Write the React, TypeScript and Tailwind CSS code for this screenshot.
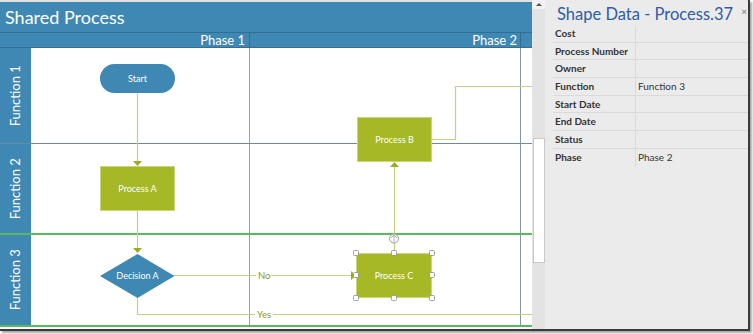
import React from 'react';

const font = { fontFamily: 'Lato, "Open Sans", Arial, sans-serif' };

const rows: [string, string][] = [
  ['Cost', ''],
  ['Process Number', ''],
  ['Owner', ''],
  ['Function', 'Function 3'],
  ['Start Date', ''],
  ['End Date', ''],
  ['Status', ''],
  ['Phase', 'Phase 2'],
];

function Lane({ label, h, top }: { label: string; h: string; top?: string }) {
  return (
    <div className={`flex shrink-0 ${h} ${top ?? ''}`}>
      <div className="w-[31px] bg-[#3f88b4] flex items-center justify-center overflow-hidden">
        <span className="-rotate-90 whitespace-nowrap text-white text-[13px]">{label}</span>
      </div>
      <div className="flex-1 flex">
        <div className="w-[219px] border-r border-[#8ea3b5]" />
        <div className="w-[271px] border-r border-[#7f96a8]" />
        <div className="flex-1" />
      </div>
    </div>
  );
}

function Box({ x, y, w, h, text, round }: { x: number; y: number; w: number; h: number; text: string; round?: boolean }) {
  return (
    <div
      className={`absolute flex items-center justify-center text-[9px] text-white ${round ? 'rounded-full bg-[#3f88b4]' : 'bg-[#a6b826] border border-[#c9d67a]'}`}
      style={{ left: x, top: y, width: w, height: h }}
    >
      {text}
    </div>
  );
}

function Diagram() {
  const line = '#c3d37d';
  const arrow = '#98ad1f';
  const handles = [
    [356, 253], [394, 253], [432, 253],
    [356, 275], [432, 275],
    [356, 298], [394, 298], [432, 298],
  ];
  return (
    <div className="relative w-[532px] h-full flex flex-col pt-[2px] bg-[#e0e0e0]" style={font}>
      <div className="shrink-0 h-[30px] bg-[#3f88b4] text-white text-[18px] pl-[5px] flex items-center">Shared Process</div>
      <div className="shrink-0 h-[16px] bg-[#3f88b4] border-y border-[#2f6f94] flex text-white text-[13px]">
        <div className="w-[31px]" />
        <div className="w-[219px] border-r border-[#2f6f94] text-right pr-[4px] leading-[14px]">Phase 1</div>
        <div className="w-[271px] border-r border-[#2f6f94] text-right pr-[3px] leading-[14px]">Phase 2</div>
      </div>
      <div className="bg-white flex flex-col shrink-0">
        <Lane label="Function 1" h="h-[95px]" />
        <Lane label="Function 2" h="h-[90px]" top="border-t border-[#6d8aa0]" />
        <Lane label="Function 3" h="h-[92px]" top="border-t-2 border-[#5cb85c]" />
        <div className="h-[2px] bg-[#5cb85c]" />
      </div>
      <div className="flex-1 bg-white" />

      <svg className="absolute left-0 top-0" width="532" height="334">
        <g fill="none" stroke={line} strokeWidth="1.2">
          <path d="M137.5 92 V161" />
          <path d="M137.5 211 V248" />
          <path d="M174 275.5 H351" />
          <path d="M137.5 298 V314.5 H532" />
          <path d="M394.5 253 V167" />
          <path d="M431 139.5 H455.5 V86.5 H532" />
        </g>
        <path d="M133 161 L142 161 L137.5 166 Z" fill={arrow} />
        <path d="M133 248 L142 248 L137.5 253 Z" fill={arrow} />
        <path d="M390 167 L399 167 L394.5 162 Z" fill={arrow} />
        <path d="M351 271 L351 280 L356 275.5 Z" fill={arrow} />
        <path d="M137.5 254 L174.5 276 L137.5 298 L100 276 Z" fill="#3f88b4" />
        <rect x="256" y="269" width="15" height="12" fill="white" />
        <rect x="255" y="308" width="18" height="12" fill="white" />
        <text x="258" y="278.5" fontSize="9.5" fill="#8a9b22" style={font}>No</text>
        <text x="257" y="317.5" fontSize="9.5" fill="#8a9b22" style={font}>Yes</text>
        <text x="137.5" y="279" fontSize="9" fill="white" textAnchor="middle" style={font}>Decision A</text>
        <circle cx="394" cy="238.5" r="4.5" fill="white" stroke="#9a9a9a" strokeWidth="1" />
        <path d="M394 235 V242 M391 238 L394 235 L397 238" fill="none" stroke="#9a9a9a" strokeWidth="0.8" />
      </svg>

      <Box x={100} y={64} w={75} h={29} text="Start" round />
      <Box x={100} y={166} w={75} h={45} text="Process A" />
      <Box x={357} y={117} w={75} h={45} text="Process B" />
      <Box x={356} y={253} w={76} h={45} text="Process C" />

      <svg className="absolute left-0 top-0 pointer-events-none" width="532" height="334">
        {handles.map(([x, y], i) => (
          <rect key={i} x={x - 2.5} y={y - 2.5} width="5" height="5" rx="1" fill="white" stroke="#8a8a8a" strokeWidth="0.8" />
        ))}
      </svg>
    </div>
  );
}

function Scrollbar() {
  return (
    <div className="w-[13px] h-full bg-[#e3e3e3] flex flex-col items-center">
      <div className="h-[9px] w-full bg-[#f2f2f2] flex items-center justify-center">
        <div className="w-0 h-0 border-x-[3px] border-x-transparent border-b-[3px] border-b-[#555]" />
      </div>
      <div className="h-[129px]" />
      <div className="w-[12px] h-[125px] bg-white border border-[#c8c8c8]" />
    </div>
  );
}

function Panel() {
  return (
    <div className="flex-1 h-full bg-[#ebebeb] relative overflow-hidden" style={font}>
      <div className="flex items-start justify-between pl-[12px] pr-[1px] pt-[1px] h-[25px] whitespace-nowrap">
        <span className="text-[16.5px] text-[#2f5ca8] leading-[26px]">Shape Data - Process.37</span>
        <span className="text-[10px] text-[#777] leading-[20px]">×</span>
      </div>
      <div className="ml-[8px]">
        {rows.map(([k, v], i) => (
          <div key={k} className={`flex h-[17.7px] items-center text-[10px] text-[#333] whitespace-nowrap ${i < rows.length - 1 ? 'border-b border-[#dadada]' : ''}`}>
            <div className="w-[83px] font-bold pl-[2px] h-full flex items-center border-r border-[#dadada]">{k}</div>
            <div className="pl-[2px]">{v}</div>
          </div>
        ))}
      </div>
    </div>
  );
}

export default function App() {
  return (
    <div className="w-[753px] h-[334px] bg-white overflow-hidden">
      <div className="w-[750px] h-[331px] flex border-r-[2px] border-b-[2px] border-[#3a3a3a] shadow-[2px_2px_2px_rgba(0,0,0,0.35)]">
        <Diagram />
        <Scrollbar />
        <Panel />
      </div>
    </div>
  );
}
